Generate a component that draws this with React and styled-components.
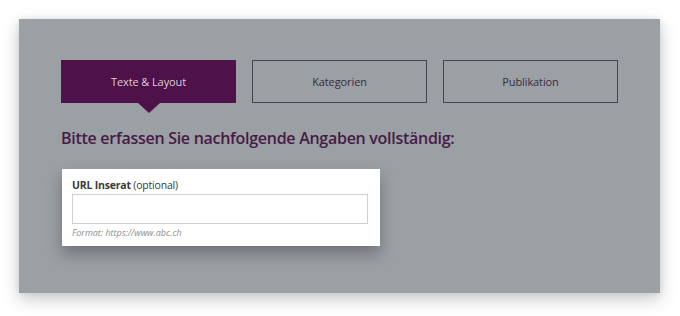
import React from "react";
import styled, { createGlobalStyle } from "styled-components";

const Global = createGlobalStyle`
  html, body { margin: 0; padding: 0; background: #ffffff; }
  body { font-family: "Open Sans", "Liberation Sans", sans-serif; }
`;

const Page = styled.div`
  padding: 19px 20px 23px 19px;
`;

const Panel = styled.div`
  width: 641px;
  height: 274px;
  box-sizing: border-box;
  background: #9aa0a3;
  box-shadow: 0 6px 16px rgba(0, 0, 0, 0.22), 0 0 6px rgba(0, 0, 0, 0.08);
  padding: 41px 0 0 42px;
`;

const Tabs = styled.div`
  display: flex;
  gap: 16px;
`;

const Tab = styled.div`
  position: relative;
  width: 175px;
  height: 43px;
  box-sizing: border-box;
  display: flex;
  align-items: center;
  justify-content: center;
  font-size: 11px;
  letter-spacing: -0.1px;
  background: ${(p) => (p.$active ? "#4e1149" : "transparent")};
  color: ${(p) => (p.$active ? "#d9cfd8" : "#3b2c40")};
  border: ${(p) => (p.$active ? "none" : "1.5px solid #474352")};

  ${(p) =>
    p.$active &&
    `
    &::after {
      content: "";
      position: absolute;
      left: 50%;
      top: 100%;
      margin-left: -11px;
      border-left: 11px solid transparent;
      border-right: 11px solid transparent;
      border-top: 10px solid #4e1149;
    }
  `}
`;

const Heading = styled.h2`
  margin: 24px 0 0 0;
  font-size: 16px;
  line-height: 22px;
  font-weight: 600;
  color: #471a47;
  letter-spacing: -0.28px;
`;

const Card = styled.div`
  margin: 20px 0 0 1px;
  width: 318px;
  box-sizing: border-box;
  background: #ffffff;
  padding: 9px 12px 8px 10px;
  box-shadow: 0 8px 14px rgba(40, 30, 50, 0.35);
`;

const Label = styled.div`
  font-size: 10.5px;
  line-height: 14px;
  color: #3a3a3a;
  letter-spacing: -0.2px;
  b { font-weight: 700; }
  margin-bottom: 2px;
`;

const Input = styled.div`
  height: 30px;
  box-sizing: border-box;
  border: 1px solid #cfcfcf;
  background: #fff;
`;

const Hint = styled.div`
  margin-top: 3px;
  font-size: 9px;
  line-height: 11px;
  font-style: italic;
  font-weight: 400;
  color: #8d8d8d;
  letter-spacing: 0;
`;

export default function App() {
  return (
    <>
      <Global />
      <Page>
        <Panel>
          <Tabs>
            <Tab $active>Texte &amp; Layout</Tab>
            <Tab>Kategorien</Tab>
            <Tab>Publikation</Tab>
          </Tabs>
          <Heading>Bitte erfassen Sie nachfolgende Angaben vollständig:</Heading>
          <Card>
            <Label>
              <b>URL Inserat</b> (optional)
            </Label>
            <Input />
            <Hint>Format: https://www.abc.ch</Hint>
          </Card>
        </Panel>
      </Page>
    </>
  );
}
